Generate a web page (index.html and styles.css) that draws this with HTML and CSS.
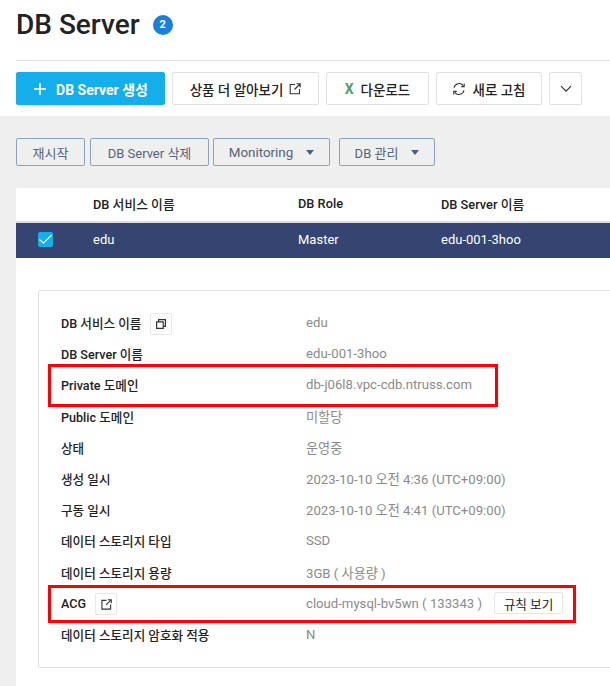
FILE: index.html
```html
<!DOCTYPE html>
<html lang="ko">
<head>
    <meta charset="UTF-8">
    <title>DB Server</title>
    <link rel="stylesheet" href="styles.css">
</head>
<body>
    <header class="top">
        <div class="title-row">
            <h1>DB Server</h1>
            <span class="count">2</span>
        </div>
        <div class="toolbar">
            <button class="btn btn-create">
                <svg width="14" height="14" viewBox="0 0 14 14"><path d="M7 1v12M1 7h12" stroke="#fff" stroke-width="1.6" fill="none"/></svg>
                DB Server 생성
            </button>
            <button class="btn btn-more">상품 더 알아보기
                <svg width="12" height="12" viewBox="0 0 12 12"><path d="M6 1.5H1.2v9.3h9.3V6M7.5 .8h3.7v3.7M11 1L5.5 6.5" stroke="#333" stroke-width="1.1" fill="none"/></svg>
            </button>
            <button class="btn btn-down"><span class="xls">X</span>다운로드</button>
            <button class="btn btn-refresh">
                <svg width="14" height="14" viewBox="0 0 14 14"><path d="M2 5.6A5.2 5.2 0 0 1 11.2 3.6M12 8.4A5.2 5.2 0 0 1 2.8 10.4" stroke="#333" stroke-width="1.1" fill="none"/><path d="M12.2 1.6v3h-3M1.8 12.4v-3h3" stroke="#333" stroke-width="1.1" fill="none"/></svg>
                새로 고침
            </button>
            <button class="btn btn-caret">
                <svg width="12" height="8" viewBox="0 0 12 8"><path d="M1 1.2l5 5 5-5" stroke="#333" stroke-width="1.2" fill="none"/></svg>
            </button>
        </div>
    </header>

    <main class="content">
        <div class="actions">
            <button class="act act-restart">재시작</button>
            <button class="act act-delete">DB Server 삭제</button>
            <button class="act act-monitor">Monitoring<i class="tri"></i></button>
            <button class="act act-manage">DB 관리<i class="tri"></i></button>
        </div>

        <section class="panel">
            <div class="grid-row grid-head">
                <span>DB 서비스 이름</span>
                <span>DB Role</span>
                <span>DB Server 이름</span>
            </div>
            <div class="grid-row grid-selected">
                <span class="check">
                    <svg width="15" height="15" viewBox="0 0 15 15"><path d="M1.5 7.5l4 3.6 8-8" stroke="#fff" stroke-width="1.1" fill="none"/></svg>
                </span>
                <span>edu</span>
                <span>Master</span>
                <span>edu-001-3hoo</span>
            </div>

            <div class="detail">
                <dl class="card">
                    <div class="item"><dt>DB 서비스 이름<span class="icon-btn"><svg width="10" height="10" viewBox="0 0 10 10"><path d="M.6 2.8h6.6v6.6H.6zM2.6 2.6V.6h6.8v6.8H7.4" stroke="#333" stroke-width="1.2" fill="none"/></svg></span></dt><dd>edu</dd></div>
                    <div class="item"><dt>DB Server 이름</dt><dd>edu-001-3hoo</dd></div>
                    <div class="item"><dt>Private 도메인</dt><dd>db-j06l8.vpc-cdb.ntruss.com</dd></div>
                    <div class="item"><dt>Public 도메인</dt><dd>미할당</dd></div>
                    <div class="item"><dt>상태</dt><dd>운영중</dd></div>
                    <div class="item"><dt>생성 일시</dt><dd>2023-10-10 오전 4:36 (UTC+09:00)</dd></div>
                    <div class="item"><dt>구동 일시</dt><dd>2023-10-10 오전 4:41 (UTC+09:00)</dd></div>
                    <div class="item"><dt>데이터 스토리지 타입</dt><dd>SSD</dd></div>
                    <div class="item"><dt>데이터 스토리지 용량</dt><dd>3GB ( 사용량 )</dd></div>
                    <div class="item"><dt>ACG<span class="icon-btn"><svg width="11" height="11" viewBox="0 0 12 12"><path d="M6 1.5H1v9.5h9.5V6M7.5 .8h3.7v3.7M11 1L5.5 6.5" stroke="#333" stroke-width="1.2" fill="none"/></svg></span></dt><dd>cloud-mysql-bv5wn ( 133343 )<span class="rule-btn">규칙 보기</span></dd></div>
                    <div class="item"><dt>데이터 스토리지 암호화 적용</dt><dd>N</dd></div>
                </dl>
            </div>
        </section>
    </main>

    <!-- 빨간 강조 박스 -->
    <div class="mark mark-domain"></div>
    <div class="mark mark-acg"></div>
</body>
</html>
```

FILE: styles.css
```css
* {
    box-sizing: border-box;
}
html, body {
    height: 686px;
}
body {
    margin: 0;
    position: relative;
    overflow: hidden;
    background: #fff;
    font-family: Roboto, "Noto Sans CJK KR", sans-serif;
    font-size: 13px;
    color: #222;
}
button {
    font-family: inherit;
    cursor: pointer;
}

/* top */
.top {
    height: 116px;
    padding: 0 0 0 16px;
}
.title-row {
    height: 61px;
    padding-top: 9px;
    display: flex;
    align-items: flex-start;
    border-bottom: 1px solid #e3e3e3;
}
h1 {
    margin: 0;
    font-size: 28px;
    line-height: 32px;
    font-weight: 500;
    color: #222;
}
.count {
    width: 20px;
    height: 20px;
    margin: 6px 0 0 13px;
    border-radius: 50%;
    background: #1a7fd9;
    color: #fff;
    font-size: 11px;
    font-weight: 700;
    line-height: 20px;
    text-align: center;
}
.toolbar {
    display: flex;
    gap: 7px;
    margin-top: 11px;
}
.btn {
    height: 33px;
    padding: 0;
    display: flex;
    align-items: center;
    justify-content: center;
    background: #fff;
    border: 1px solid #e1e1e1;
    border-radius: 2px;
    font-size: 13.5px;
    font-weight: 500;
    color: #222;
}
.btn-create {
    width: 149px;
    gap: 9px;
    background: #14aeeb;
    border-color: #14aeeb;
    color: #fff;
    font-size: 14px;
    font-weight: 700;
}
.btn-more {
    width: 147px;
    gap: 6px;
}
.btn-down {
    width: 103px;
    gap: 7px;
}
.xls {
    color: #4f9e6f;
    font-weight: 700;
    font-size: 14px;
}
.btn-refresh {
    width: 106px;
    gap: 6px;
}
.btn-caret {
    width: 33px;
}

/* gray area */
.content {
    height: 570px;
    padding: 22px 0 0 16px;
    background: #efefef;
}
.actions {
    display: flex;
    height: 28px;
}
.act {
    height: 28px;
    padding: 0;
    display: flex;
    align-items: center;
    justify-content: center;
    background: transparent;
    border: 1px solid #8ba2bd;
    border-radius: 2px;
    font-size: 13px;
    color: #55647c;
}
.act-restart {
    width: 69px;
    margin-right: 5px;
}
.act-delete {
    width: 119px;
    margin-right: 4px;
}
.act-monitor {
    width: 117px;
    margin-right: 9px;
    font-size: 13.4px;
}
.act-manage {
    width: 96px;
}
.tri {
    width: 0;
    height: 0;
    margin-left: 13px;
    border-left: 4px solid transparent;
    border-right: 4px solid transparent;
    border-top: 5px solid #4a5f7c;
}

/* table */
.panel {
    margin-top: 22px;
    background: #fff;
    border-radius: 2px 0 0 0;
    height: 498px;
}
.grid-row {
    display: grid;
    grid-template-columns: 77px 205px 143px 1fr;
    align-items: center;
}
.grid-head {
    height: 35px;
    padding-left: 77px;
    grid-template-columns: 205px 143px 1fr;
    border-bottom: 2px solid #dedede;
    font-size: 12.8px;
    font-weight: 500;
    padding-bottom: 2px;
}
.grid-selected {
    height: 35px;
    padding-bottom: 2px;
    background: #354470;
    color: #fff;
}
.check {
    width: 15px;
    height: 15px;
    margin-left: 22px;
    border-radius: 2px;
    background: #14aeeb;
    display: flex;
}

/* detail */
.detail {
    padding: 32px 0 0 22px;
}
.card {
    margin: 0;
    height: 378px;
    width: 620px;
    padding: 16px 0 0 22px;
    border: 1px solid #e0e0e0;
    border-radius: 2px;
}
.item {
    display: flex;
    align-items: center;
    height: 31.2px;
}
.item dt {
    width: 245px;
    display: flex;
    align-items: center;
    font-size: 12.6px;
    font-weight: 500;
    color: #222;
}
.item dd {
    margin: 0;
    display: flex;
    align-items: center;
    font-size: 13.15px;
    color: #8a8a8a;
}
.icon-btn {
    width: 22px;
    height: 22px;
    margin: 2px 0 0 9px;
    display: flex;
    align-items: center;
    justify-content: center;
    border: 1px solid #e8e8e8;
    border-radius: 2px;
}
.rule-btn {
    height: 22px;
    width: 69px;
    margin-left: 12px;
    display: flex;
    align-items: center;
    justify-content: center;
    border: 1px solid #e6e6e6;
    border-radius: 2px;
    font-size: 12.6px;
    color: #222;
}

/* red marks over the screenshot */
.mark {
    position: absolute;
    border: 3px solid #f00;
}
.mark-domain {
    left: 48px;
    top: 364px;
    width: 450px;
    height: 43px;
}
.mark-acg {
    left: 48px;
    top: 585px;
    width: 528px;
    height: 38px;
}
```
